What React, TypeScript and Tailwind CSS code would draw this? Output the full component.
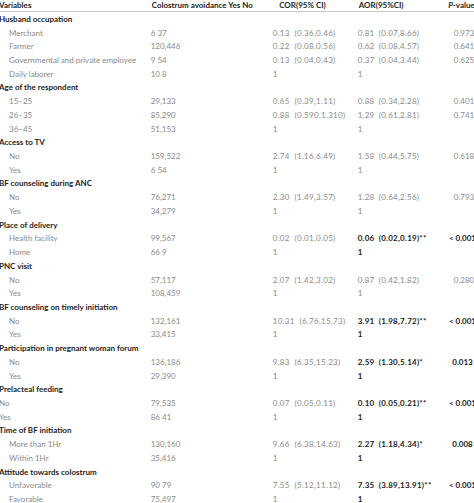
import React from 'react';

type Row = {
  label: string;
  group?: boolean;
  flat?: boolean;
  n?: string;
  cor?: string;
  aor?: string;
  p?: string;
  bold?: boolean;
};

const rows: Row[] = [
  { label: 'Husband occupation', group: true },
  { label: 'Merchant', n: '6 37', cor: '0.13 (0.36,0.46)', aor: '0.81 (0.07,8.66)', p: '0.973' },
  { label: 'Farmer', n: '120,446', cor: '0.22 (0.08,0.56)', aor: '0.62 (0.08,4.57)', p: '0.641' },
  { label: 'Governmental and private employee', n: '9 54', cor: '0.13 (0.04,0.43)', aor: '0.37 (0.04,3.44)', p: '0.625' },
  { label: 'Daily laborer', n: '10 8', cor: '1', aor: '1' },
  { label: 'Age of the respondent', group: true },
  { label: '15–25', n: '29,133', cor: '0.65 (0.39,1.11)', aor: '0.88 (0.34,2.28)', p: '0.401' },
  { label: '26–35', n: '85,290', cor: '0.88 (0.590,1.310)', aor: '1.29 (0.61,2.81)', p: '0.741' },
  { label: '36–45', n: '51,153', cor: '1', aor: '1' },
  { label: 'Access to TV', group: true },
  { label: 'No', n: '159,522', cor: '2.74 (1.16,6.49)', aor: '1.58 (0.44,5.75)', p: '0.618' },
  { label: 'Yes', n: '6 54', cor: '1', aor: '1' },
  { label: 'BF counseling during ANC', group: true },
  { label: 'No', n: '76,271', cor: '2.30 (1.49,3.57)', aor: '1.28 (0.64,2.56)', p: '0.793' },
  { label: 'Yes', n: '34,279', cor: '1', aor: '1' },
  { label: 'Place of delivery', group: true },
  { label: 'Health facility', n: '99,567', cor: '0.02 (0.01,0.05)', aor: '0.06 (0.02,0.19)**', p: '< 0.001', bold: true },
  { label: 'Home', n: '66 9', cor: '1', aor: '1', bold: true },
  { label: 'PNC visit', group: true },
  { label: 'No', n: '57,117', cor: '2.07 (1.42,3.02)', aor: '0.87 (0.42,1.82)', p: '0.280' },
  { label: 'Yes', n: '108,459', cor: '1', aor: '1' },
  { label: 'BF counseling on timely initiation', group: true },
  { label: 'No', n: '132,161', cor: '10.31 (6.76,15.73)', aor: '3.91 (1.98,7.72)**', p: '< 0.001', bold: true },
  { label: 'Yes', n: '33,415', cor: '1', aor: '1', bold: true },
  { label: 'Participation in pregnant woman forum', group: true },
  { label: 'No', n: '136,186', cor: '9.83 (6.35,15.23)', aor: '2.59 (1.30,5.14)*', p: '0.013', bold: true },
  { label: 'Yes', n: '29,390', cor: '1', aor: '1', bold: true },
  { label: 'Prelacteal feeding', group: true },
  { label: 'No', flat: true, n: '79,535', cor: '0.07 (0.05,0.11)', aor: '0.10 (0.05,0.21)**', p: '< 0.001', bold: true },
  { label: 'Yes', flat: true, n: '86 41', cor: '1', aor: '1', bold: true },
  { label: 'Time of BF initiation', group: true },
  { label: 'More than 1Hr', n: '130,160', cor: '9.66 (6.38,14.63)', aor: '2.27 (1.18,4.34)*', p: '0.008', bold: true },
  { label: 'Within 1Hr', n: '35,416', cor: '1', aor: '1', bold: true },
  { label: 'Attitude towards colostrum', group: true },
  { label: 'Unfavorable', n: '90 79', cor: '7.55 (5.12,11.12)', aor: '7.35 (3.89,13.91)**', p: '< 0.001', bold: true },
  { label: 'Favorable', n: '75,497', cor: '1', aor: '1', bold: true },
];

const cols = 'grid grid-cols-[151.7px_122px_85px_83.3px_46px]';

export default function App() {
  return (
    <div className="w-[474px] h-[503px] overflow-hidden bg-white font-['Lato','Open_Sans',sans-serif] text-[8px]">
      <div className="w-[490px] -ml-px">
        <div className={`${cols} h-[12px] leading-[11px] border-b border-[#c8c8c8] font-bold text-[#1c1c1c] whitespace-nowrap`}>
          <div>Variables</div>
          <div className="pl-px">Colostrum avoidance Yes No</div>
          <div className="pl-[6.5px]">COR(95% CI)</div>
          <div className="pl-px">AOR(95%CI)</div>
          <div className="text-center pr-[5px]"><span className="italic">P</span>-value</div>
        </div>

        {rows.map((r, i) =>
          r.group ? (
            <div key={i} className="h-[13.72px] flex items-center font-bold text-[#1c1c1c] whitespace-nowrap">
              {r.label}
            </div>
          ) : (
            <div key={i} className={`${cols} h-[13.72px] items-center text-[#8a8a8a] whitespace-nowrap`}>
              <div className={r.flat ? '' : 'pl-[10px]'}>{r.label}</div>
              <div>{r.n}</div>
              <div className="tracking-[0.3px] [word-spacing:2.5px]">{r.cor}</div>
              <div className={`tracking-[0.25px] [word-spacing:2px] ${r.bold ? 'font-bold text-[#1c1c1c]' : ''}`}>{r.aor}</div>
              <div className={`text-center ${r.bold ? 'font-bold text-[#1c1c1c] pr-[3px]' : ''}`}>{r.p}</div>
            </div>
          )
        )}
      </div>
    </div>
  );
}
